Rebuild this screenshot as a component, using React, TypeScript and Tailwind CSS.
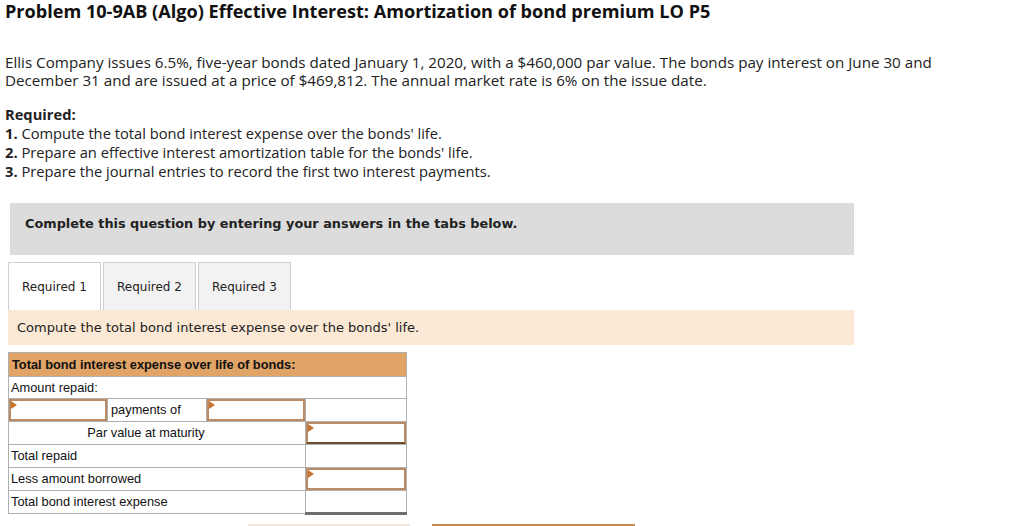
import React from 'react';

const Flag = () => (
  <span className="absolute left-0 top-0 h-0 w-0 border-y-[4px] border-l-[6px] border-y-transparent border-l-[#c8742e]" />
);

function InputCell({ dark = false }: { dark?: boolean }) {
  return (
    <div
      className={`relative h-[22px] w-full border-2 border-[#b98a63] bg-white ${dark ? 'border-b-[#6b4a2e]' : ''}`}
    >
      <Flag />
    </div>
  );
}

export default function App() {
  const tabs = ['Required 1', 'Required 2', 'Required 3'];

  return (
    <div className="h-[526px] w-[1024px] overflow-hidden bg-white text-[#222]">
      {/* Title */}
      <h1 className="pl-[5px] font-['Open_Sans',sans-serif] text-[18.1px] font-bold leading-[22px] text-[#111]">
        Problem 10-9AB (Algo) Effective Interest: Amortization of bond premium LO P5
      </h1>

      {/* Problem text */}
      <div className="mt-[31px] pl-[5px] font-['Open_Sans',sans-serif] text-[15.2px] leading-[18px] text-[#222]">
        <p>
          Ellis Company issues 6.5%, five-year bonds dated January 1, 2020, with a $460,000 par value. The bonds pay
          interest on June 30 and
          <br />
          December 31 and are issued at a price of $469,812. The annual market rate is 6% on the issue date.
        </p>
        <div className="mt-[16px] text-[14.7px] leading-[19px]">
          <p className="font-bold">Required:</p>
          <p>
            <span className="font-bold">1.</span> Compute the total bond interest expense over the bonds' life.
          </p>
          <p>
            <span className="font-bold">2.</span> Prepare an effective interest amortization table for the bonds' life.
          </p>
          <p>
            <span className="font-bold">3.</span> Prepare the journal entries to record the first two interest payments.
          </p>
        </div>
      </div>

      {/* Instruction bar */}
      <div className="ml-[10px] mt-[22px] h-[52px] w-[844px] bg-[#dcdcdc] pl-[15px] pt-[12px] font-['DejaVu_Sans',sans-serif] text-[12.85px] font-bold leading-[18px] text-[#222]">
        Complete this question by entering your answers in the tabs below.
      </div>

      {/* Tabs */}
      <div className="ml-[8px] mt-[7px] flex gap-[2px] font-['DejaVu_Sans',sans-serif] text-[12px] text-[#222]">
        {tabs.map((t, i) => (
          <div
            key={t}
            className={`flex h-[48px] w-[93px] items-center justify-center border border-b-0 border-[#cfcfcf] ${
              i === 0 ? 'relative z-10 -mb-px bg-white' : 'bg-[#f2f2f2]'
            }`}
          >
            {t}
          </div>
        ))}
      </div>
      <div className="ml-[8px] flex h-[35px] w-[846px] items-center bg-[#fbe9d5] pl-[9px] font-['DejaVu_Sans',sans-serif] text-[13px] text-[#222]">
        Compute the total bond interest expense over the bonds' life.
      </div>

      {/* Worksheet table */}
      <table className="ml-[8px] mt-[7px] w-[398px] table-fixed border-collapse font-['Liberation_Sans',sans-serif] text-[12.8px] text-[#111]">
        <colgroup>
          <col className="w-[99px]" />
          <col className="w-[99px]" />
          <col className="w-[99px]" />
          <col className="w-[101px]" />
        </colgroup>
        <tbody>
          <tr>
            <td colSpan={4} className="h-[24px] border border-[#b0b0b0] bg-[#e0a467] px-[3px] font-bold">
              Total bond interest expense over life of bonds:
            </td>
          </tr>
          <tr>
            <td colSpan={4} className="h-[22px] border border-[#b0b0b0] px-[2px]">
              Amount repaid:
            </td>
          </tr>
          <tr>
            <td className="h-[23px] border border-[#b0b0b0] p-0">
              <InputCell />
            </td>
            <td className="border border-[#b0b0b0] px-[3px]">payments of</td>
            <td className="border border-[#b0b0b0] p-0">
              <InputCell />
            </td>
            <td className="border border-[#b0b0b0]" />
          </tr>
          <tr>
            <td colSpan={3} className="h-[23px] border border-[#b0b0b0] pr-[22px] text-center">
              Par value at maturity
            </td>
            <td className="border border-[#b0b0b0] p-0">
              <InputCell dark />
            </td>
          </tr>
          <tr>
            <td colSpan={3} className="h-[23px] border border-[#b0b0b0] px-[2px]">
              Total repaid
            </td>
            <td className="border border-[#b0b0b0]" />
          </tr>
          <tr>
            <td colSpan={3} className="h-[23px] border border-[#b0b0b0] px-[2px]">
              Less amount borrowed
            </td>
            <td className="border border-[#b0b0b0] p-0">
              <InputCell />
            </td>
          </tr>
          <tr>
            <td colSpan={3} className="h-[23px] border border-[#b0b0b0] px-[2px]">
              Total bond interest expense
            </td>
            <td className="border border-[#b0b0b0] border-b-[3px] border-b-[#6e6e6e]" />
          </tr>
        </tbody>
      </table>

      {/* Navigation buttons (cut off) */}
      <div className="mt-[9px] flex gap-[22px] pl-[248px]">
        <div className="h-[30px] w-[162px] border-t-2 border-[#f3e6dc] bg-white" />
        <div className="h-[30px] w-[203px] border-t-2 border-[#c98a4f] bg-white" />
      </div>
    </div>
  );
}
